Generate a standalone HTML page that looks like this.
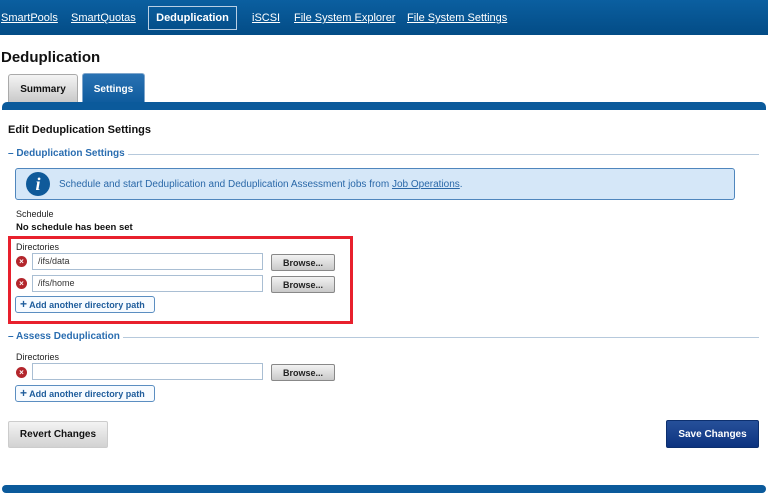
<!DOCTYPE html>
<html><head><style>
*{margin:0;padding:0;box-sizing:border-box}
body{width:768px;height:500px;background:#fff;font-family:"Liberation Sans",Arial,sans-serif;position:relative;overflow:hidden;color:#111}
.a{position:absolute}
.nav{left:0;top:0;width:768px;height:35px;background:linear-gradient(#0b5fa0,#034c86)}
.nav a{position:absolute;top:12px;color:#fff;font-size:11px;text-decoration:underline}
.tabsel{left:148px;top:6px;width:89px;height:24px;border:1px solid #b9cfe4;color:#fff;font-weight:bold;font-size:11px;text-align:center;line-height:22px}
.lbl{font-size:9px;color:#222}
.inp{height:17px;border:1px solid #a9bed3;background:#fff;font-size:9px;color:#333;padding-left:5px;line-height:15px}
.br{width:64px;height:17px;border:1px solid #888;border-radius:2px;background:linear-gradient(#f2f2f2,#c9c9c9);font-size:9px;font-weight:bold;text-align:center;line-height:16px;color:#222}
.x{width:11px;height:11px;border-radius:50%;background:#b3262c;color:#fff;font-size:8px;font-weight:bold;text-align:center;line-height:11px}
.add{width:140px;height:17px;border:1px solid #5b8ec1;border-radius:3px;background:#f7fbff;color:#1f5d9c;font-size:9px;font-weight:bold;line-height:15px;padding-left:4px}
.add b{font-size:12px}
.leg{font-size:10px;font-weight:bold;color:#2a6db0;background:#fff;padding:0 3px 0 0}
.line{height:1px;background:#b6c9dc}
</style></head><body>
<div class="a nav">
<a style="left:1px">SmartPools</a><a style="left:71px">SmartQuotas</a>
<div class="a tabsel">Deduplication</div>
<a style="left:252px">iSCSI</a><a style="left:294px">File System Explorer</a><a style="left:407px">File System Settings</a>
</div>
<div class="a" style="left:1px;top:49px;font-size:15px;font-weight:bold">Deduplication</div>
<div class="a" style="left:8px;top:74px;width:70px;height:29px;border:1px solid #aaa;border-bottom:none;border-radius:3px 3px 0 0;background:linear-gradient(#f4f4f4,#c8c8c8);font-size:10px;font-weight:bold;text-align:center;line-height:29px">Summary</div>
<div class="a" style="left:82px;top:73px;width:63px;height:31px;border:1px solid #7fa6cc;border-bottom:none;border-radius:3px 3px 0 0;background:linear-gradient(#2a72b3,#0d5a9c);color:#fff;font-size:10px;font-weight:bold;text-align:center;line-height:31px">Settings</div>
<div class="a" style="left:2px;top:102px;width:764px;height:8px;background:#0b5a9b;border-radius:5px 5px 0 0"></div>
<div class="a" style="left:8px;top:124px;font-size:11px;font-weight:bold">Edit Deduplication Settings</div>
<div class="a line" style="left:8px;top:154px;width:751px"></div>
<div class="a leg" style="left:8px;top:148px">– Deduplication Settings</div>
<div class="a" style="left:15px;top:168px;width:720px;height:32px;border:1px solid #4f86bd;border-radius:3px;background:#d5e7f8"></div>
<div class="a" style="left:26px;top:172px;width:24px;height:24px;border-radius:50%;background:#0f5a9a;color:#fff;font-family:'Liberation Serif',serif;font-style:italic;font-weight:bold;font-size:18px;text-align:center;line-height:24px">i</div>
<div class="a" style="left:59px;top:179px;font-size:10px;color:#2a68a8">Schedule and start Deduplication and Deduplication Assessment jobs from <u>Job Operations</u>.</div>
<div class="a lbl" style="left:16px;top:209px">Schedule</div>
<div class="a" style="left:16px;top:222px;font-size:9.5px;font-weight:bold">No schedule has been set</div>
<div class="a" style="left:8px;top:236px;width:345px;height:88px;border:3px solid #e8202d"></div>
<div class="a lbl" style="left:16px;top:242px">Directories</div>
<div class="a x" style="left:16px;top:256px">×</div>
<div class="a inp" style="left:32px;top:253px;width:231px">/ifs/data</div>
<div class="a br" style="left:271px;top:254px">Browse...</div>
<div class="a x" style="left:16px;top:278px">×</div>
<div class="a inp" style="left:32px;top:275px;width:231px">/ifs/home</div>
<div class="a br" style="left:271px;top:276px">Browse...</div>
<div class="a add" style="left:15px;top:296px"><b>+</b> Add another directory path</div>
<div class="a line" style="left:8px;top:337px;width:751px"></div>
<div class="a leg" style="left:8px;top:331px">– Assess Deduplication</div>
<div class="a lbl" style="left:16px;top:352px">Directories</div>
<div class="a x" style="left:16px;top:367px">×</div>
<div class="a inp" style="left:32px;top:363px;width:231px"></div>
<div class="a br" style="left:271px;top:364px">Browse...</div>
<div class="a add" style="left:15px;top:385px"><b>+</b> Add another directory path</div>
<div class="a" style="left:8px;top:421px;width:100px;height:27px;border:1px solid #ccc;border-radius:2px;background:linear-gradient(#f3f3f3,#d2d2d2);font-size:10px;font-weight:bold;text-align:center;line-height:26px">Revert Changes</div>
<div class="a" style="left:666px;top:420px;width:93px;height:28px;border:1px solid #0c2f6e;border-radius:2px;background:linear-gradient(#26509a,#0d3380);color:#fff;font-size:10px;font-weight:bold;text-align:center;line-height:28px">Save Changes</div>
<div class="a" style="left:2px;top:485px;width:764px;height:8px;background:#0b5a9b;border-radius:4px"></div>
</body></html>
